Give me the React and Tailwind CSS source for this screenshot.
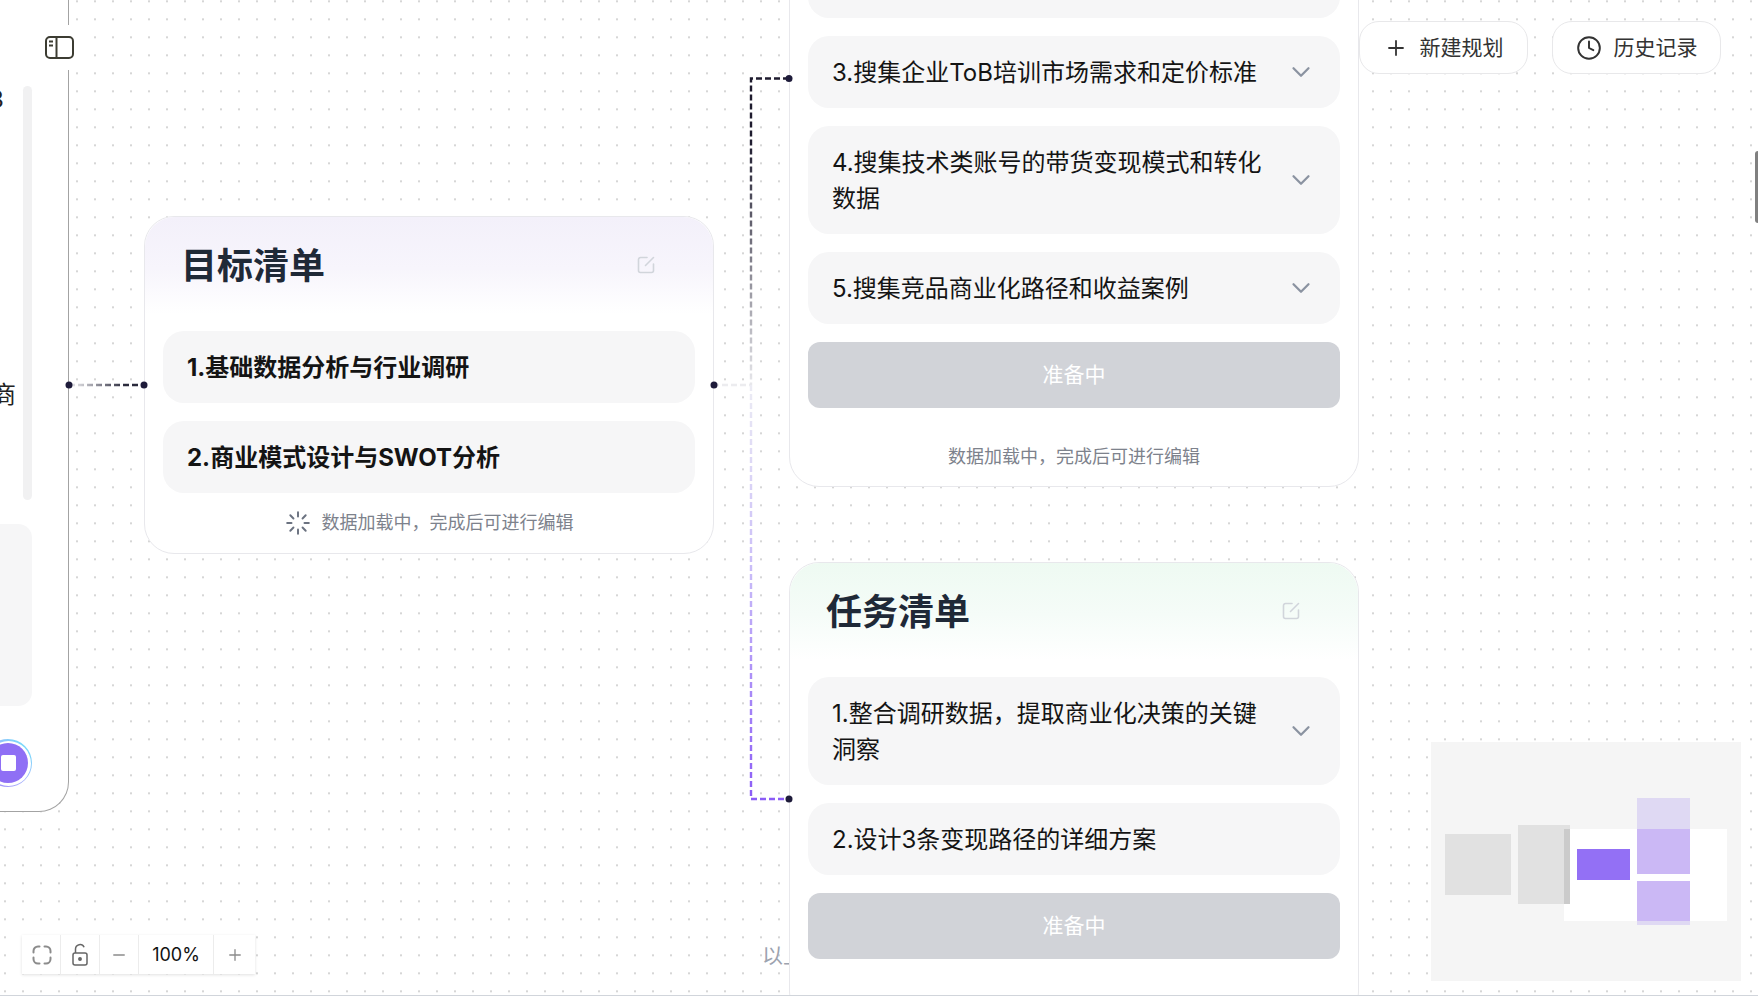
import React from 'react';
import { ChevronDown, Clock, Loader, Minus, Plus } from 'lucide-react';

const fontStack = "font-['Inter','Noto_Sans_CJK_SC',sans-serif]";

function Item({ text, bold, expandable }) {
  return (
    <div className="flex items-center rounded-[21px] bg-[#f6f6f7] pb-[17px] pl-[24px] pr-[24px] pt-[19px]">
      <p className={`w-[442px] text-[24px] leading-[36px] text-[#141414] ${bold ? 'font-bold' : 'font-normal'}`}>
        {text}
      </p>
      {expandable && <ChevronDown size={30} strokeWidth={1.8} className="-mt-[2px] ml-auto text-[#8b93a1]" />}
    </div>
  );
}

function EditIcon() {
  return (
    <svg width="20" height="20" viewBox="0 0 20 20" fill="none" stroke="#d1d5db" strokeWidth="1.6" strokeLinecap="round" className="mt-[16px]">
      <path d="M11 2.5H4.5a2 2 0 0 0-2 2v11a2 2 0 0 0 2 2h11a2 2 0 0 0 2-2V9" />
      <path d="M17.5 2.5L9.5 10.5" />
    </svg>
  );
}

function CardHeader({ title, gradient }) {
  return (
    <div className={`flex h-[114px] justify-between rounded-t-[30px] pl-[36px] pr-[57px] pt-[22px] ${gradient}`}>
      <h2 className="text-[36px] font-bold leading-[54px] text-[#1f2937]">{title}</h2>
      <EditIcon />
    </div>
  );
}

function PrepareButton() {
  return (
    <div className="flex h-[66px] items-center justify-center rounded-[12px] bg-[#d1d3d8] text-[21px] text-white">
      准备中
    </div>
  );
}

function Connectors() {
  return (
    <svg className="absolute inset-0" width="1758" height="996" fill="none">
      <defs>
        <linearGradient id="leftLink" gradientUnits="userSpaceOnUse" x1="69" y1="385" x2="144" y2="385">
          <stop offset="0.1" stopColor="#dcdce0" />
          <stop offset="0.75" stopColor="#2a2a3c" />
        </linearGradient>
        <linearGradient id="topLink" gradientUnits="userSpaceOnUse" x1="751" y1="78" x2="751" y2="385">
          <stop offset="0.2" stopColor="#1e1b2e" />
          <stop offset="1" stopColor="#e8e8ec" />
        </linearGradient>
        <linearGradient id="bottomLink" gradientUnits="userSpaceOnUse" x1="751" y1="385" x2="751" y2="799">
          <stop offset="0" stopColor="#ececf4" />
          <stop offset="0.45" stopColor="#c9bcf8" />
          <stop offset="1" stopColor="#8b5cf6" />
        </linearGradient>
      </defs>
      <path d="M69 385H144" stroke="url(#leftLink)" strokeWidth="2.4" strokeDasharray="6 3" />
      <path d="M713 385H751" stroke="#ececef" strokeWidth="2.4" strokeDasharray="6 3" />
      <path d="M789 78.5H751V385" stroke="url(#topLink)" strokeWidth="2.4" strokeDasharray="6 3" />
      <path d="M751 385V799H789" stroke="url(#bottomLink)" strokeWidth="2.4" strokeDasharray="6 3" />
    </svg>
  );
}

function ConnectorDots() {
  return (
    <svg className="absolute inset-0" width="1758" height="996" fill="#1e1b3a">
      <circle cx="69" cy="385" r="3.5" />
      <circle cx="144" cy="385" r="3.5" />
      <circle cx="714" cy="385" r="3.5" />
      <circle cx="789" cy="78.5" r="3.5" />
      <circle cx="789" cy="799" r="3.5" />
    </svg>
  );
}

function Minimap() {
  return (
    <svg className="absolute left-[1431px] top-[742px]" width="310" height="239" viewBox="1431 742 310 239">
      <rect x="1431" y="742" width="310" height="239" fill="#f5f5f5" />
      <rect x="1564" y="829" width="163" height="92" fill="#ffffff" />
      <rect x="1445" y="834" width="66" height="61" fill="#e1e1e1" />
      <rect x="1518" y="825" width="52" height="79" fill="#e1e1e1" />
      <rect x="1564" y="829" width="6" height="75" fill="#cbcbcb" />
      <rect x="1577" y="849" width="53" height="31" fill="#9370f5" />
      <rect x="1637" y="798" width="53" height="31" fill="#dfd9f3" />
      <rect x="1637" y="829" width="53" height="45" fill="#cbb8f5" />
      <rect x="1637" y="881" width="53" height="40" fill="#cbb8f5" />
      <rect x="1637" y="921" width="53" height="4" fill="#dfd9f3" />
    </svg>
  );
}

function LeftPanel() {
  return (
    <div className="absolute left-0 top-0 flex h-[812px] w-[69px] flex-col overflow-hidden rounded-br-[30px] border-b border-r border-[#a3a3a3] bg-white pr-[36px] pt-[86px]">
      <span className="absolute left-[-11px] top-[82px] text-[24px] leading-[36px] text-[#222222]">3</span>
      <span className="absolute left-[-8px] top-[377px] text-[24px] leading-[36px] text-[#222222]">商</span>
      <div className="ml-auto h-[414px] w-[9px] shrink-0 rounded-full bg-[#f1f1f2]" />
      <div className="mt-[24px] h-[182px] w-[32px] shrink-0 rounded-r-[14px] bg-[#f6f6f7]" />
      <div className="ml-[-16px] mt-[33px] h-[48px] w-[48px] shrink-0 rounded-full bg-[linear-gradient(45deg,#a78bfa,#a5b4fc,#67e8f9)] p-[1.5px]">
        <div className="h-full w-full rounded-full bg-white p-[2.5px]">
          <div className="flex h-full w-full items-center justify-center rounded-full bg-[#8f6ff5]">
            <div className="ml-[1px] h-[16px] w-[15px] rounded-[2px] bg-white" />
          </div>
        </div>
      </div>
    </div>
  );
}

function PanelToggle() {
  return (
    <div className="absolute left-[37px] top-[25px] flex h-[45px] w-[45px] items-center justify-center bg-white">
      <svg width="29" height="23" viewBox="0 0 29 23" fill="none" stroke="#3c3c32" strokeWidth="2">
        <rect x="1" y="1" width="27" height="21" rx="4" />
        <path d="M11.5 1V22" />
        <path d="M4 5.5H8M4 9.5H8" />
      </svg>
    </div>
  );
}

function TopButton({ icon, label }) {
  return (
    <button className="flex h-[53px] w-[169px] items-center justify-center gap-[12px] rounded-[20px] border border-[#e8e8ea] bg-white text-[21px] text-[#333333]">
      {icon}
      {label}
    </button>
  );
}

function ZoomBar() {
  return (
    <div className="absolute left-[22px] top-[935px] flex h-[39px] items-stretch bg-white text-[#8c8c8c] shadow-[0_1px_3px_rgba(0,0,0,0.12)]">
      <div className="flex w-[39px] items-center justify-center border-r border-[#ececec] pl-[1px]">
        <svg width="20" height="20" viewBox="0 0 20 20" fill="none" stroke="currentColor" strokeWidth="2" strokeLinecap="round">
          <path d="M1.5 7.5V6a4.5 4.5 0 0 1 4.5-4.5h1.5" />
          <path d="M12.5 1.5H14a4.5 4.5 0 0 1 4.5 4.5v1.5" />
          <path d="M18.5 12.5V14a4.5 4.5 0 0 1-4.5 4.5h-1.5" />
          <path d="M7.5 18.5H6A4.5 4.5 0 0 1 1.5 14v-1.5" />
        </svg>
      </div>
      <div className="flex w-[39px] items-center justify-center border-r border-[#ececec] text-[#666666]">
        <svg width="18" height="24" viewBox="0 0 18 24" fill="none" stroke="currentColor" strokeWidth="1.5">
          <rect x="2" y="10" width="14" height="12" rx="2" />
          <path d="M4.5 10V6a4.5 4.5 0 0 1 8.6-1.8" />
          <circle cx="9" cy="16" r="1.2" fill="currentColor" />
        </svg>
      </div>
      <div className="flex w-[39px] items-center justify-center border-r border-[#ececec]">
        <Minus size={18} strokeWidth={1.8} />
      </div>
      <div className="flex w-[75px] items-center justify-center border-r border-[#ececec] text-[18px] text-[#111111]">
        100%
      </div>
      <div className="flex w-[41px] items-center justify-center">
        <Plus size={18} strokeWidth={1.8} />
      </div>
    </div>
  );
}

export default function App() {
  return (
    <div className={`relative h-[996px] w-[1758px] overflow-hidden bg-white ${fontStack}`}>
      <div className="absolute inset-0 bg-[radial-gradient(circle,#d6d6d6_1px,transparent_1.2px)] [background-position:-4px_-7.7px] [background-size:18px_18px]" />

      <Connectors />

      <span className="absolute left-[762px] top-[940px] text-[21px] leading-[32px] text-[#9ca3af]">以上</span>

      <LeftPanel />
      <PanelToggle />

      {/* Goal list */}
      <div className="absolute left-[144px] top-[216px] h-[338px] w-[570px] rounded-[30px] border-[1.5px] border-[#e8e8ec] bg-white">
        <CardHeader title="目标清单" gradient="bg-[linear-gradient(180deg,#f3f0fa_0%,#f7f5fc_45%,#ffffff_85%)]" />
        <div className="flex flex-col gap-[18px] px-[18px]">
          <Item text="1.基础数据分析与行业调研" bold />
          <Item text="2.商业模式设计与SWOT分析" bold />
        </div>
        <div className="mt-[16px] flex items-center justify-center gap-[11px] text-[18px] leading-[27px] text-[#7d828c]">
          <Loader size={26} strokeWidth={1.8} className="text-[#6b7280]" />
          数据加载中，完成后可进行编辑
        </div>
      </div>

      {/* Research list, runs off the top of the canvas */}
      <div className="absolute left-[789px] top-[-73px] flex w-[570px] flex-col gap-[18px] rounded-[30px] border-[1.5px] border-[#e8e8ec] bg-white px-[18px] pb-[16px] pt-[18px]">
        <div className="h-[72px] rounded-[21px] bg-[#f6f6f7]" />
        <Item text="3.搜集企业ToB培训市场需求和定价标准" expandable />
        <Item text="4.搜集技术类账号的带货变现模式和转化数据" expandable />
        <Item text="5.搜集竞品商业化路径和收益案例" expandable />
        <PrepareButton />
        <div className="mt-[17px] text-center text-[18px] leading-[27px] text-[#7d828c]">
          数据加载中，完成后可进行编辑
        </div>
      </div>

      {/* Task list */}
      <div className="absolute left-[789px] top-[562px] h-[460px] w-[570px] rounded-[30px] border-[1.5px] border-[#e8e8ec] bg-white">
        <CardHeader title="任务清单" gradient="bg-[linear-gradient(180deg,#eefaf2_0%,#f5fcf8_45%,#ffffff_85%)]" />
        <div className="flex flex-col gap-[18px] px-[18px]">
          <Item text="1.整合调研数据，提取商业化决策的关键洞察" expandable />
          <Item text="2.设计3条变现路径的详细方案" />
          <PrepareButton />
        </div>
      </div>

      <ConnectorDots />

      <div className="absolute left-[1359px] top-[21px] flex gap-[24px]">
        <TopButton icon={<Plus size={24} strokeWidth={1.8} className="text-[#333333]" />} label="新建规划" />
        <TopButton icon={<Clock size={26} strokeWidth={1.8} className="text-[#333333]" />} label="历史记录" />
      </div>

      <Minimap />
      <ZoomBar />

      <div className="absolute right-0 top-[151px] h-[72px] w-[3px] rounded-l-[3px] bg-[#808080]" />
      <div className="absolute bottom-0 left-0 h-px w-full bg-[#d1d5db]" />
    </div>
  );
}
